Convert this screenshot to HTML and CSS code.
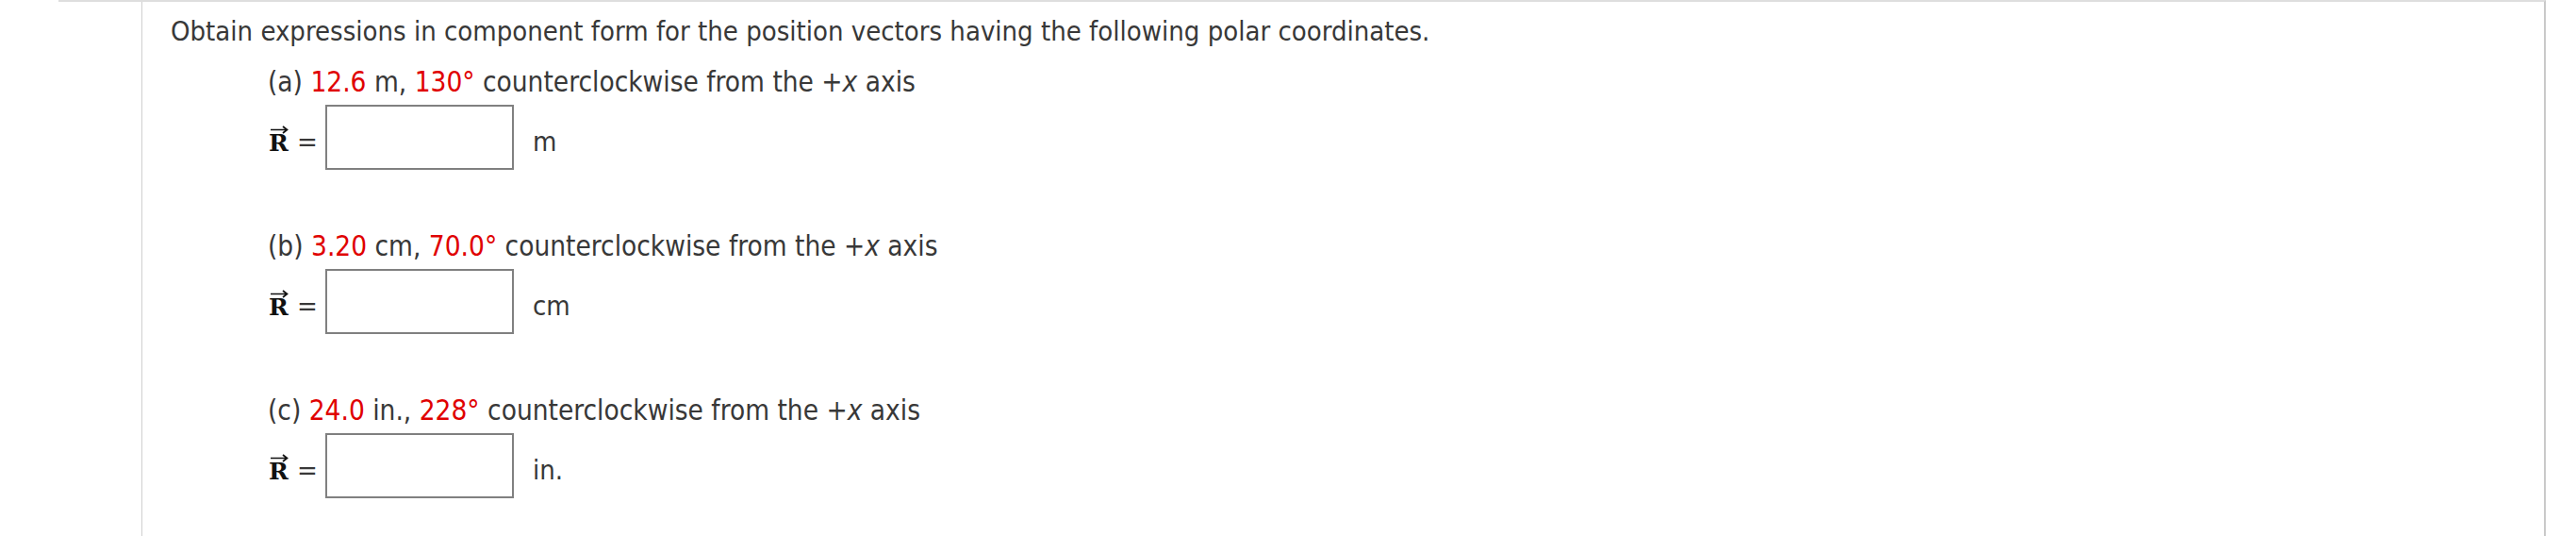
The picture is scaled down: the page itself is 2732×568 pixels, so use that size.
FILE: index.html
```html
<!DOCTYPE html>
<html lang="en">
<head>
<meta charset="utf-8">
<title>Polar to component form</title>
<link rel="stylesheet" href="styles.css">
</head>
<body>
<div class="card">
  <div class="gutter"></div>
  <div class="content">
    <p class="question">Obtain expressions in component form for the position vectors having the following polar coordinates.</p>

    <div class="part">
      <p class="prompt">(a) <span class="val">12.6</span> m, <span class="val">130°</span> counterclockwise from the +<i>x</i> axis</p>
      <div class="answer">
        <span class="vec"><svg class="arrow" width="20" height="9" viewBox="0 0 20 9"><path d="M1 4.5H18M14 1L18.5 4.5L14 8" fill="none" stroke="#111" stroke-width="1.7"/></svg><span class="vec-letter">R</span></span>
        <span class="eq">=</span>
        <input class="box" type="text" aria-label="R (a)">
        <span class="unit">m</span>
      </div>
    </div>

    <div class="part">
      <p class="prompt">(b) <span class="val">3.20</span> cm, <span class="val">70.0°</span> counterclockwise from the +<i>x</i> axis</p>
      <div class="answer">
        <span class="vec"><svg class="arrow" width="20" height="9" viewBox="0 0 20 9"><path d="M1 4.5H18M14 1L18.5 4.5L14 8" fill="none" stroke="#111" stroke-width="1.7"/></svg><span class="vec-letter">R</span></span>
        <span class="eq">=</span>
        <input class="box" type="text" aria-label="R (b)">
        <span class="unit">cm</span>
      </div>
    </div>

    <div class="part">
      <p class="prompt">(c) <span class="val">24.0</span> in., <span class="val">228°</span> counterclockwise from the +<i>x</i> axis</p>
      <div class="answer">
        <span class="vec"><svg class="arrow" width="20" height="9" viewBox="0 0 20 9"><path d="M1 4.5H18M14 1L18.5 4.5L14 8" fill="none" stroke="#111" stroke-width="1.7"/></svg><span class="vec-letter">R</span></span>
        <span class="eq">=</span>
        <input class="box" type="text" aria-label="R (c)">
        <span class="unit">in.</span>
      </div>
    </div>
  </div>
</div>
</body>
</html>
```

FILE: styles.css
```css
html, body {
  margin: 0;
  padding: 0;
  background: #fff;
  overflow: hidden;
}

body {
  font-family: "DejaVu Sans Condensed", Verdana, "DejaVu Sans", sans-serif;
  font-size: 29px;
  color: #383838;
}

.card {
  display: flex;
  margin: 0 32px 0 62px;
  min-height: 566px;
  border-top: 2px solid #dedede;
  border-right: 2px solid #c9c9c9;
}

.gutter {
  width: 88px;
  flex: none;
  border-right: 1px solid #cfcfcf;
}

.content {
  flex: 1;
  padding: 15px 0 0 30px;
}

.question {
  margin: 0;
  line-height: 32px;
}

.part {
  margin: 22px 0 0 103px;
}

.part + .part {
  margin-top: 65px;
}

.prompt {
  margin: 0;
  font-size: 29.5px;
  line-height: 32px;
}

.val {
  color: #e00000;
}

.answer {
  display: flex;
  align-items: center;
  margin-top: 8px;
  height: 69px;
}

.vec {
  display: inline-flex;
  flex-direction: column;
  align-items: center;
  padding-top: 6px;
  width: 23px;
  color: #111;
}

.arrow {
  display: block;
  margin-bottom: -3px;
}

.vec-letter {
  font-family: "DejaVu Serif", "Liberation Serif", serif;
  font-weight: bold;
  font-size: 25px;
  line-height: 25px;
}

.eq {
  margin-left: 8px;
  padding-top: 8px;
  line-height: 30px;
}

.box {
  box-sizing: border-box;
  width: 200px;
  height: 69px;
  margin: 0 0 0 8px;
  padding: 0 8px;
  border: 2px solid #808080;
  border-radius: 0;
  background: #fff;
  font: inherit;
  outline: none;
}

.unit {
  margin-left: 20px;
  padding-top: 8px;
  line-height: 30px;
}
```
